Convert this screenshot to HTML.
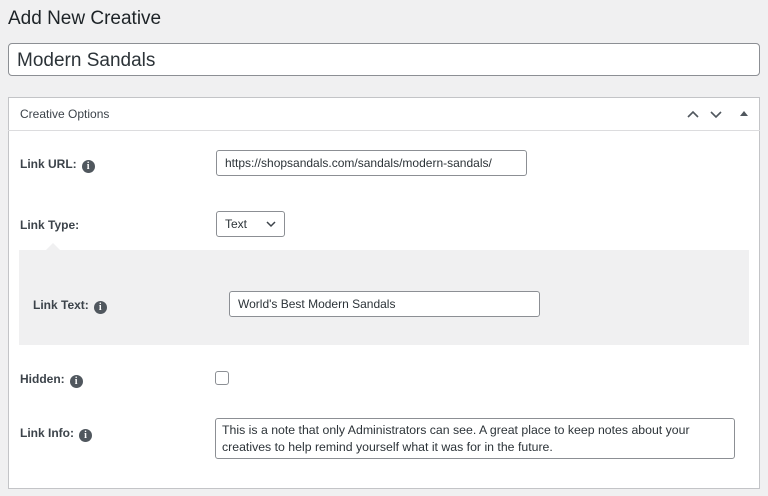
<!DOCTYPE html>
<html><head><style>
*{box-sizing:border-box;margin:0;padding:0}
body{width:768px;height:496px;background:#f0f0f1;font-family:"Liberation Sans",sans-serif;color:#1d2327;position:relative;overflow:hidden}
.a{position:absolute}
h1{position:absolute;left:8px;top:8px;font-size:19px;font-weight:400;color:#1d2327}
.title{left:8px;top:43px;width:752px;height:33px;background:#fff;border:1px solid #8c8f94;border-radius:4px;font-size:19px;padding:6px 8px;color:#2c3338}
.panel{left:8px;top:97px;width:752px;height:392px;background:#fff;border:1px solid #c3c4c7}
.hd{left:8px;top:97px;width:752px;height:34px;border-bottom:1px solid #dcdcde}
.hdt{left:20px;top:107px;font-size:12px;color:#3c434a}
.lab{font-size:12px;font-weight:700;color:#3c434a}
.i{display:inline-block;width:13px;height:13px;border-radius:50%;background:#50575e;color:#fff;font-size:10px;font-weight:700;text-align:center;line-height:13px;margin-left:5px;font-family:"Liberation Serif",serif;vertical-align:-1px}
.inp{background:#fff;border:1px solid #8c8f94;border-radius:3px;font-size:12px;color:#2c3338;padding:0 8px;line-height:24px}
.gray{left:19px;top:250px;width:730px;height:95px;background:#f0f0f1}
</style></head><body>
<h1>Add New Creative</h1>
<div class="a title">Modern Sandals</div>
<div class="a panel"></div>
<div class="a hd"></div>
<div class="a hdt">Creative Options</div>
<svg class="a" style="left:686px;top:108px" width="66" height="12" viewBox="0 0 66 12"><path d="M2 9 L7 4 L12 9" fill="none" stroke="#50575e" stroke-width="1.6"/><path d="M25 4 L30 9 L35 4" fill="none" stroke="#50575e" stroke-width="1.6"/><path d="M54 8 L58 3 L62 8Z" fill="#50575e"/></svg>
<div class="a lab" style="left:20px;top:157px">Link URL:<span class="i">i</span></div>
<div class="a inp" style="left:216px;top:150px;width:311px;height:26px">https://shopsandals.com/sandals/modern-sandals/</div>
<div class="a lab" style="left:20px;top:218px">Link Type:</div>
<div class="a inp" style="left:216px;top:211px;width:69px;height:26px">Text</div>
<svg class="a" style="left:266px;top:220px" width="10" height="8"><path d="M1 2 L5 6 L9 2" fill="none" stroke="#3c434a" stroke-width="1.5"/></svg>
<div class="a gray"></div>
<svg class="a" style="left:45px;top:242px" width="16" height="9"><path d="M0 9 L8 1 L16 9Z" fill="#f0f0f1"/></svg>
<div class="a lab" style="left:33px;top:298px">Link Text:<span class="i">i</span></div>
<div class="a inp" style="left:229px;top:291px;width:311px;height:26px">World's Best Modern Sandals</div>
<div class="a lab" style="left:20px;top:372px">Hidden:<span class="i">i</span></div>
<div class="a" style="left:215px;top:371px;width:14px;height:14px;border:1px solid #8c8f94;border-radius:3px;background:#fff"></div>
<div class="a lab" style="left:20px;top:426px">Link Info:<span class="i">i</span></div>
<div class="a inp" style="left:215px;top:418px;width:520px;height:41px;line-height:17px;padding:3px 6px;font-size:12.3px">This is a note that only Administrators can see. A great place to keep notes about your creatives to help remind yourself what it was for in the future.</div>
</body></html>
